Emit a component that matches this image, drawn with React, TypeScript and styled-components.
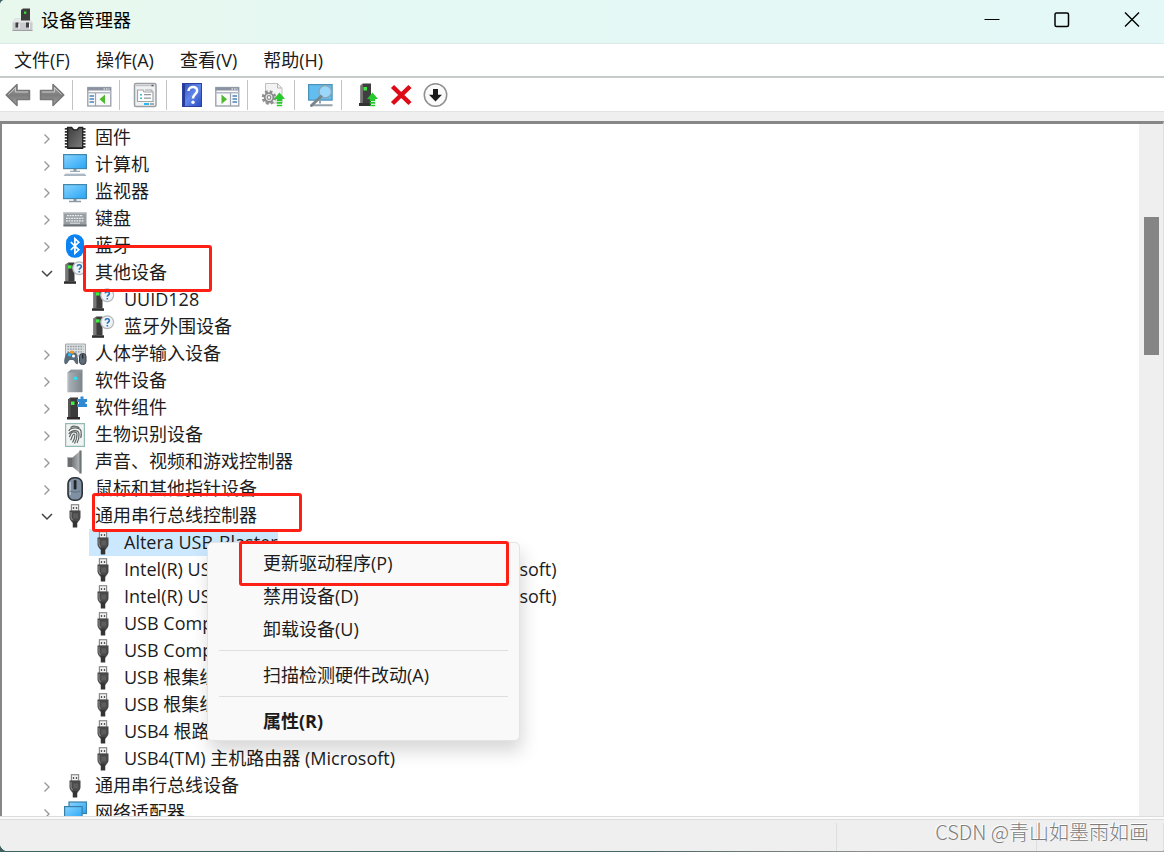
import React from "react";
import styled, { createGlobalStyle, css } from "styled-components";

const GlobalStyle = createGlobalStyle`
  * { box-sizing: border-box; }
  html, body { margin: 0; padding: 0; }
  body {
    background: linear-gradient(90deg, #3d625f 0%, #4b6664 55%, #8f918e 75%, #a3a3a1 100%);
    font-family: "Open Sans", "Noto Sans CJK SC", sans-serif;
    font-size: 18px;
    color: #1c1c1c;
    overflow: hidden;
  }
  button { font: inherit; color: inherit; background: none; border: 0; padding: 0; }
  ul { list-style: none; margin: 0; padding: 0; }
`;

const Window = styled.div`
  display: flex;
  flex-direction: column;
  height: calc(100vh - 1px);
  background: #efefef;
  border-radius: 5px 1px 3px 8px;
  overflow: hidden;
`;

const TitleBar = styled.header`
  display: flex;
  align-items: center;
  flex: none;
  height: 44px;
  padding: 0 0 4px 12px;
  background: linear-gradient(90deg, #e9f8ed 0%, #e4f8f4 35%, #e4f8f7 100%);
  border-bottom: 1px solid #dcebea;
`;

const Title = styled.h1`
  flex: 1;
  margin: 0 0 0 8px;
  font-size: 18px;
  font-weight: 400;
  line-height: 24px;
  color: #000;
`;

const WindowControls = styled.div`
  display: flex;
  gap: 6px;
`;

const WindowButton = styled.button`
  display: flex;
  align-items: center;
  justify-content: center;
  width: 64px;
  height: 40px;
`;

const MenuBar = styled.nav`
  display: flex;
  flex: none;
  height: 34px;
  padding-left: 1px;
  background: #fff;
  border-bottom: 2px solid #c6cacb;
`;

const MenuBarButton = styled.button`
  padding: 0 13px;
  line-height: 32px;
  white-space: nowrap;
`;

const Toolbar = styled.div`
  display: flex;
  align-items: center;
  flex: none;
  height: 33px;
  padding: 1px 0 0 1px;
  background: #fff;
`;

const ToolButton = styled.button`
  display: flex;
  align-items: center;
  justify-content: center;
  width: 34px;
  height: 31px;
`;

const ToolSeparator = styled.span`
  width: 1px;
  height: 30px;
  margin: 0 9px 0 3px;
  background: #c3c3c3;
`;

const Strip = styled.div`
  flex: none;
  height: 10px;
  background: #efefef;
  border-top: 1px solid #e3e3e3;
`;

const Content = styled.main`
  display: flex;
  flex: 1;
  min-height: 0;
  border-top: 3px solid #878787;
  border-left: 2px solid #878787;
  border-right: 1px solid #e0e0e0;
  background: #fff;
`;

const TreePane = styled.div`
  flex: 1;
  min-width: 0;
  overflow: hidden;
`;

const Row = styled.div`
  position: relative;
  display: flex;
  align-items: center;
  height: 27px;
  padding-left: 37px;
`;

const Toggle = styled.button`
  display: flex;
  align-items: center;
  justify-content: center;
  width: 15px;
  height: 27px;
  margin-right: 9px;
`;

const Label = styled.span`
  margin-left: 8px;
  line-height: 27px;
  white-space: nowrap;
`;

const ChildRow = styled.div<{ $selected?: boolean }>`
  position: relative;
  display: flex;
  align-items: center;
  width: max-content;
  height: 27px;
  margin-left: 87px;
  padding: 0 0 0 2px;
  ${(p) =>
    p.$selected &&
    css`
      background: #cce8ff;
    `}
`;

const ChildLabel = styled(Label)`
  margin-left: 9px;
`;

const Annotation = styled.span<{
  $left: number;
  $top: number;
  $width: number;
  $height: number;
}>`
  position: absolute;
  z-index: 3;
  left: ${(p) => p.$left}px;
  top: ${(p) => p.$top}px;
  width: ${(p) => p.$width}px;
  height: ${(p) => p.$height}px;
  border: 3px solid #ff2015;
  border-radius: 3px;
  pointer-events: none;
`;

const ContextMenu = styled.ul`
  position: absolute;
  z-index: 2;
  left: 118px;
  top: 13px;
  width: 313px;
  padding: 4px 0 2px;
  background: #f9f9f9;
  border: 1px solid #e4e4e4;
  border-radius: 5px;
  box-shadow: 2px 10px 18px rgba(0, 0, 0, 0.16);
`;

const ContextItem = styled.li`
  position: relative;
`;

const ContextButton = styled.button<{ $bold?: boolean }>`
  display: block;
  width: 100%;
  padding-left: 55px;
  line-height: 33px;
  text-align: left;
  font-weight: ${(p) => (p.$bold ? 700 : 400)};
`;

const ContextSeparator = styled.li`
  height: 1px;
  margin: 4px 11px 8px;
  background: #dfdfdf;
`;

const ScrollTrack = styled.div`
  display: flex;
  justify-content: center;
  align-items: flex-start;
  width: 24px;
  padding-top: 93px;
  background: #efefef;
`;

const ScrollThumb = styled.div`
  width: 15px;
  height: 23%;
  min-height: 24px;
  background: #858585;
`;

const StatusBar = styled.footer`
  flex: none;
  height: 35px;
  padding-top: 2px;
  background: #fbfbfb;
  border-top: 1px solid #dcdcdc;
`;

const StatusCells = styled.div`
  position: relative;
  display: flex;
  height: 32px;
  padding-top: 3px;
  background: #efefef;
  border-top: 1px solid #dcdcdc;
`;

const StatusCell = styled.div<{ $width?: number }>`
  flex: ${(p) => (p.$width ? `0 0 ${p.$width}px` : "1")};
  border-right: 1px solid #dedede;
`;

const Watermark = styled.span`
  position: absolute;
  right: 15px;
  top: 0;
  font-family: "Noto Sans CJK SC", sans-serif;
  font-weight: 300;
  font-size: 20px;
  line-height: 24px;
  color: #7d7d7d;
  text-shadow: -1px -1px 0 #fff;
  white-space: nowrap;
`;

function Svg({ size = 24, children }: { size?: number; children: React.ReactNode }) {
  return (
    <svg width={size} height={size} viewBox={`0 0 ${size} ${size}`} aria-hidden="true">
      {children}
    </svg>
  );
}

const HiddenSvg = styled.svg`
  display: block;
  width: 0;
  height: 0;
`;

function Gradients() {
  return (
    <HiddenSvg aria-hidden="true">
      <defs>
        <linearGradient id="screen" x1="0" y1="0" x2="1" y2="1">
          <stop offset="0" stopColor="#8ad4ff" />
          <stop offset="1" stopColor="#27a5f5" />
        </linearGradient>
        <linearGradient id="arrow" x1="0" y1="0" x2="0" y2="1">
          <stop offset="0" stopColor="#b0b0b0" />
          <stop offset="0.5" stopColor="#7c7c7c" />
          <stop offset="1" stopColor="#a2a2a2" />
        </linearGradient>
        <linearGradient id="help" x1="0" y1="0" x2="1" y2="1">
          <stop offset="0" stopColor="#3450b8" />
          <stop offset="0.5" stopColor="#5f86ea" />
          <stop offset="1" stopColor="#2b4ac0" />
        </linearGradient>
        <linearGradient id="metal" x1="0" y1="0" x2="1" y2="0">
          <stop offset="0" stopColor="#adb5ba" />
          <stop offset="1" stopColor="#7c858b" />
        </linearGradient>
        <linearGradient id="chip" x1="0" y1="0" x2="1" y2="1">
          <stop offset="0" stopColor="#3c3c3c" />
          <stop offset="1" stopColor="#7d7d7d" />
        </linearGradient>
        <linearGradient id="cone" x1="0" y1="0" x2="1" y2="0">
          <stop offset="0" stopColor="#777" />
          <stop offset="1" stopColor="#b9bec2" />
        </linearGradient>
      </defs>
    </HiddenSvg>
  );
}

const FirmwareIcon = () => (
  <Svg>
    <path d="M3.3 2v20M21 2v20" stroke="#333" strokeWidth="3" strokeDasharray="1.7 1.3" />
    <path d="M4.6 1.5h4l2 2.3h3.5l2-2.3h3.6v20.7H4.6z" fill="url(#chip)" stroke="#222" strokeWidth="1.3" />
    <path d="M4.5 22.3H20" stroke="#1c1c1c" strokeWidth="1.6" />
  </Svg>
);

const ComputerIcon = () => (
  <Svg>
    <rect x="0.6" y="1.6" width="22.8" height="14" fill="url(#screen)" stroke="#4287ae" strokeWidth="1.2" />
    <path d="M12 16v2" stroke="#8195a3" strokeWidth="3" />
    <path d="M7 18.4h10" stroke="#9cabb5" strokeWidth="1.4" />
    <path d="M2.5 20.4h19l2 2.6H.5z" fill="#a9b6c2" />
    <path d="M2.5 20.6h19" stroke="#dde4ea" />
  </Svg>
);

const MonitorIcon = () => (
  <Svg>
    <rect x="0.6" y="4.6" width="22.8" height="14" fill="url(#screen)" stroke="#4287ae" strokeWidth="1.2" />
    <path d="M12 19v2" stroke="#8195a3" strokeWidth="3" />
    <path d="M6 21.4h12" stroke="#8b9aa5" strokeWidth="1.5" />
  </Svg>
);

const KeyboardIcon = () => (
  <Svg>
    <rect x="0.5" y="5" width="23" height="14" fill="#989ea3" />
    <path d="M.5 5.8h23" stroke="#c2c7ca" strokeWidth="1.4" />
    <path d="M4 8.7h16M3 11.3h18M3 13.9h18" stroke="#eef1f3" strokeWidth="1.3" strokeDasharray="1.8 .8" />
    <path d="M7 16.2h10" stroke="#dfe3e6" />
    <path d="M.5 18.5h23" stroke="#6c7378" strokeWidth="1.8" />
  </Svg>
);

const BluetoothIcon = () => (
  <Svg>
    <rect x="3" y="0.3" width="18" height="23.4" rx="8.6" fill="#0a84f4" />
    <path d="M7.8 8l8 7.8-3.9 3.6V4.6l3.9 3.6-8 7.8" fill="none" stroke="#fff" strokeWidth="1.7" />
  </Svg>
);

const UnknownDeviceIcon = () => (
  <Svg>
    <path d="M2.5 3.5l3-2h6v19h-9z" fill="#3d3d3d" />
    <path d="M2.5 3.5l3-2v19h-3z" fill="#777" />
    <rect x="5" y="4.3" width="3.6" height="3.2" fill="#3cf03c" />
    <path d="M1 20.3h12v2.5H1z" fill="#2d2d2d" />
    <circle cx="16.2" cy="7.2" r="6.4" fill="#eef3f7" stroke="#b6b9bb" strokeWidth="1.2" />
    <path d="M14.2 5.4c.2-2.3 4.2-2.2 4.1.2-.1 1.5-2 1.6-2 3.2M16.3 10v1.5" fill="none" stroke="#2773b6" strokeWidth="1.6" />
  </Svg>
);

const HidIcon = () => (
  <Svg>
    <path d="M2.5 2h20v12h-20z" fill="#dce0e3" stroke="#a3a9ae" />
    <path d="M4.5 4.5h16M4.5 7.2h16M4.5 9.8h16" stroke="#8e969c" strokeWidth="1.3" strokeDasharray="1.6 1" />
    <path d="M3.5 11.5c2-2 3.5-.8 5-.8s3.5-1 5 .8c1.5 3 2.5 10 1 10.7-2 .8-3-4.2-4.500-4.200H7c-1.500 0-2.500 5-4.700 4.200C.2 21 1.500 14.500 3.500 11.500z" fill="#596a78" />
    <circle cx="9" cy="10.3" r="1.8" fill="#f29a1f" />
    <circle cx="6.5" cy="12.7" r="1.8" fill="#35b6f2" />
    <circle cx="10.5" cy="14" r="1.5" fill="#fff" />
    <rect x="16.5" y="11.5" width="6.5" height="11" rx="3" fill="#5f6c77" stroke="#343c43" />
    <path d="M19.7 12.5v4" stroke="#20262b" strokeWidth="1.3" />
  </Svg>
);

const SoftwareDeviceIcon = () => (
  <Svg>
    <path d="M4.5 3.5L8 .8h11.5v22.4h-15z" fill="url(#metal)" />
    <path d="M4.5 3.5L8 .8h11.5L18 3.5z" fill="#8d969c" />
    <path d="M5 3.5v19.7" stroke="#c2c9cd" />
    <circle cx="12.5" cy="9.3" r="1.9" fill="#35dcea" />
  </Svg>
);

const SoftwareComponentIcon = () => (
  <Svg>
    <path d="M5 3.5l2.5-2H15V21H5z" fill="#3b3b3b" />
    <path d="M5 3.5l2.5-2V21H5z" fill="#555" />
    <rect x="8" y="5.5" width="3.5" height="3.5" fill="#43ee43" />
    <path d="M4 21h13v2.5H4z" fill="#2a2a2a" />
    <path d="M14 3h3.5V.5h3V3H24v3h-1.500v2H24v3H14V8h2V6h-2z" fill="#2f8ad4" />
  </Svg>
);

const FingerprintIcon = () => (
  <Svg>
    <rect x="2.6" y="0.6" width="18.8" height="22.8" fill="#f0f4f2" stroke="#93b9b3" strokeWidth="1.2" />
    <g fill="none" stroke="#5e6564" strokeWidth="1.2">
      <path d="M7.5 4.5c3-2 7-1.5 8.8.3M5.8 8c1.5-4 11-4.5 12.2 0 .5 2.5.3 5-.3 7" />
      <path d="M5.8 11c3-4.5 9.7-4.5 10.2 0 .2 4-.5 6.5-2 9" />
      <path d="M6.3 14c1.2-1 .8-4.8 4-5.2 2.5-.1 3.7 1 3.7 2.7 0 3.5-1 6.5-2.5 9" />
      <path d="M7.5 17c1.5-1.5 1.5-5.5 3.5-6 1.5.5 1 4.5-1.5 8.5" />
    </g>
  </Svg>
);

const SpeakerIcon = () => (
  <Svg>
    <path d="M4 7.5h5.5V17H4z" fill="#696d70" />
    <path d="M9 8l8.5-7.5v23L9 16.5z" fill="url(#cone)" />
    <path d="M17.5.5v23" stroke="#6f7477" strokeWidth="2.2" />
    <path d="M4.5 7.5V17" stroke="#b8bcbf" />
  </Svg>
);

const MouseIcon = () => (
  <Svg>
    <rect x="5" y="0.8" width="14.2" height="22.4" rx="6" fill="#7f90a3" stroke="#2c3238" strokeWidth="1.6" />
    <path d="M7.2 5v13" stroke="#c6d2de" strokeWidth="1.2" />
    <rect x="10.7" y="3" width="2.8" height="9.5" rx="1.2" fill="#22272c" />
    <path d="M7 14c2 1.5 8 1.5 10 0" fill="none" stroke="#62707e" />
  </Svg>
);

const UsbIcon = () => (
  <Svg>
    <rect x="8.4" y="0.7" width="7.2" height="6.5" fill="#f1f1f1" stroke="#8b8b8b" strokeWidth="1.2" />
    <path d="M10.5 3v2M13.5 3v2" stroke="#555" strokeWidth="1.3" />
    <path d="M6.5 6.5h11V13c0 3-2 3.5-2.5 5.5H9c-.5-2-2.5-2.5-2.5-5.5z" fill="#484848" />
    <path d="M8 8v5c0 1.5 1 2 1.5 3" fill="none" stroke="#858585" strokeWidth="1.2" />
    <path d="M10.2 9.5h5v5h-5z" fill="#5c5c5c" />
    <path d="M12 17v6.5" stroke="#343434" strokeWidth="4.5" />
  </Svg>
);

const NetworkIcon = () => (
  <Svg>
    <rect x="6" y="1" width="17.5" height="11.5" fill="url(#screen)" stroke="#3a7fa8" strokeWidth="1.2" />
    <rect x="1.6" y="5.6" width="17.5" height="12" fill="url(#screen)" stroke="#3a7fa8" strokeWidth="1.2" />
    <path d="M10.3 18v3M6 21h9" stroke="#8195a3" strokeWidth="1.5" />
  </Svg>
);

const AppIcon = () => (
  <svg width="21" height="24" viewBox="0 0 21 24" aria-hidden="true">
    <path d="M3 10.5h14.5l3 4V23H.5v-8.5z" fill="#c9cacd" />
    <path d="M3 10.5h14.5l3 4H.5z" fill="#e6e7e8" />
    <path d="M9 2l2-1.500h7V12.500H9z" fill="#3d3d3d" />
    <rect x="12" y="3.5" width="2.3" height="2.3" fill="#38e038" />
    <path d="M.5 22.5h20" stroke="#9d9ea2" strokeWidth="1.2" />
    <path d="M5 14.5v5M15.5 14.5v5" stroke="#3f3f3f" strokeWidth="3" />
    <path d="M7 15.5v5M17.5 15.5v5" stroke="#fff" />
  </svg>
);

const BackIcon = () => (
  <Svg size={26}>
    <path d="M1.2 13L12 2.5v6h12.5v9H12v6z" fill="url(#arrow)" stroke="#777" strokeWidth="1.5" strokeLinejoin="round" />
    <path d="M3.5 12.5l7-7V10H23" fill="none" stroke="#c8c8c8" />
  </Svg>
);

const ForwardIcon = () => (
  <Svg size={26}>
    <path d="M24.8 13L14 2.5v6H1.5v9H14v6z" fill="url(#arrow)" stroke="#777" strokeWidth="1.5" strokeLinejoin="round" />
    <path d="M3 10h12.5V5.5l7 7" fill="none" stroke="#c8c8c8" />
  </Svg>
);

function PanelIcon({ right }: { right?: boolean }) {
  return (
    <Svg size={26}>
      <rect x="1.8" y="5.5" width="23" height="18.5" fill="#fafafa" stroke="#979ea9" strokeWidth="1.3" />
      <path d="M1.5 7H25" stroke="#8b93a2" strokeWidth="3" />
      <path d="M17.5 7h6" stroke="#fff" strokeWidth="1.2" strokeDasharray="1.5 1" />
      <path d="M2 10.7h23" stroke="#b4bac3" strokeWidth="1.5" />
      <path d={right ? "M16.5 11v13" : "M9.5 11v13"} stroke="#9ca3ad" strokeWidth="1.2" />
      <path
        d={right ? "M18.5 14H23M18.5 17H23M18.5 20H23" : "M3.5 14H8M3.5 17H8M3.5 20H8"}
        stroke="#4a82bd"
        strokeWidth="1.5"
      />
      <path d={right ? "M7.5 12.5l5.500 4.800-5.500 4.700z" : "M19 12.500l-5.500 4.800L19 22z"} fill="#4dba2d" />
    </Svg>
  );
}

const PropertiesIcon = () => (
  <Svg size={26}>
    <rect x="1.5" y="1.5" width="21.5" height="23" rx="1.5" fill="#f0f1f2" stroke="#9b9fa3" strokeWidth="1.5" />
    <path d="M2.5 3.5h19" stroke="#c2c5c8" strokeWidth="1.5" />
    <path d="M18.5 3.5h2" stroke="#555" strokeWidth="1.5" />
    <path d="M4.5 8H10l1 2h9v9.5H4.5z" fill="#fff" stroke="#a1a6aa" strokeWidth="1.2" />
    <path d="M12 8h7v2" fill="none" stroke="#a1a6aa" />
    <path d="M7 12.7h2M7 16.2h2" stroke="#39b8e3" strokeWidth="1.5" />
    <path d="M11 12.7h7M11 16.2h7" stroke="#909599" strokeWidth="1.3" />
    <path d="M11 22h5" stroke="#28b9f0" strokeWidth="2" />
    <path d="M17 22h4" stroke="#a7abae" strokeWidth="2" />
  </Svg>
);

const HelpIcon = () => (
  <Svg size={26}>
    <rect x="2.5" y="1.5" width="19" height="23" fill="url(#help)" stroke="#2c419b" />
    <path d="M4 2v22" stroke="#263c98" strokeWidth="2" />
    <path d="M8.5 9c.2-5.5 9-5.4 8.6 0-.2 3.2-4.1 3.3-4.1 7.5" fill="none" stroke="#fff" strokeWidth="2.5" />
    <circle cx="13" cy="20.3" r="1.7" fill="#fff" />
  </Svg>
);

const GreenUp = ({ x, y }: { x: number; y: number }) => (
  <g transform={`translate(${x} ${y})`}>
    <path d="M5.5 0L11 6.5H8.2v2.3H2.8V6.5H0z" fill="#27c92c" />
    <path d="M2.8 10.4h5.4M2.8 13h5.4" stroke="#27c92c" strokeWidth="1.6" />
  </g>
);

const ScanUpdateIcon = () => (
  <Svg size={26}>
    <path d="M4.5 1.5h12L21 6v15H4.5z" fill="#f3f3f3" stroke="#c0c0c0" />
    <path d="M16.5 1.5V6H21" fill="none" stroke="#b5b5b5" />
    <circle cx="8" cy="15.5" r="5.8" fill="none" stroke="#8f8f8f" strokeWidth="3" strokeDasharray="2.6 1.96" />
    <circle cx="8" cy="15.5" r="4.3" fill="#e9e9e9" stroke="#8b8b8b" strokeWidth="1.7" />
    <circle cx="8" cy="15.5" r="1.8" fill="#fff" stroke="#8b8b8b" strokeWidth="1.2" />
    <GreenUp x={13} y={10.5} />
  </Svg>
);

const ScanHardwareIcon = () => (
  <svg width="28" height="26" viewBox="0 0 28 26" aria-hidden="true">
    <rect x="1.6" y="2.6" width="23.5" height="15.5" fill="#62bdf0" stroke="#4c91b7" strokeWidth="1.2" />
    <path d="M13 18.5v3M6 23.3h19.5" stroke="#95a3ac" strokeWidth="2" />
    <circle cx="18.2" cy="9.7" r="6.3" fill="#a5dcfb" fillOpacity="0.85" stroke="#86a8b9" strokeWidth="1.5" />
    <path d="M14 14.5l-9.5 9" stroke="#79848b" strokeWidth="3" strokeLinecap="round" />
  </svg>
);

const UpdateDriverIcon = () => (
  <Svg size={26}>
    <path d="M5.5 3.5l2.5-2h8V21H5.5z" fill="#3f3f3f" />
    <path d="M5.5 3.5l2.5-2V21H5.5z" fill="#727272" />
    <rect x="8.5" y="5" width="3.5" height="3.5" fill="#3df03d" />
    <path d="M4 21h12v3H4z" fill="#333" />
    <GreenUp x={12} y={10.5} />
  </Svg>
);

const RemoveIcon = () => (
  <Svg size={26}>
    <path d="M3.5 4.5l17.5 17M21 4.5l-17.5 17" stroke="#dd0b17" strokeWidth="4.5" />
  </Svg>
);

const DisableIcon = () => (
  <Svg size={26}>
    <circle cx="12.5" cy="13" r="11.2" fill="#fafafa" stroke="#8f8f8f" strokeWidth="1.5" />
    <path d="M10 7h5v5.7h4l-6.5 6.8L6 12.7h4z" fill="#1b1b1b" />
  </Svg>
);

type ChildNode = { name: string; selected?: boolean };
type TreeNode = {
  name: string;
  Icon: () => React.ReactElement;
  childNodes?: ChildNode[];
  mark?: [number, number, number, number];
};

const nodes: TreeNode[] = [
  { name: "固件", Icon: FirmwareIcon },
  { name: "计算机", Icon: ComputerIcon },
  { name: "监视器", Icon: MonitorIcon },
  { name: "键盘", Icon: KeyboardIcon },
  { name: "蓝牙", Icon: BluetoothIcon },
  {
    name: "其他设备",
    Icon: UnknownDeviceIcon,
    mark: [81, -14, 129, 47],
    childNodes: [{ name: "UUID128" }, { name: "蓝牙外围设备" }],
  },
  { name: "人体学输入设备", Icon: HidIcon },
  { name: "软件设备", Icon: SoftwareDeviceIcon },
  { name: "软件组件", Icon: SoftwareComponentIcon },
  { name: "生物识别设备", Icon: FingerprintIcon },
  { name: "声音、视频和游戏控制器", Icon: SpeakerIcon },
  { name: "鼠标和其他指针设备", Icon: MouseIcon },
  {
    name: "通用串行总线控制器",
    Icon: UsbIcon,
    mark: [90, -9, 210, 39],
    childNodes: [
      { name: "Altera USB-Blaster", selected: true },
      { name: "Intel(R) USB 3.10 可扩展主机控制器 - 1.10 (Microsoft)" },
      { name: "Intel(R) USB 3.10 可扩展主机控制器 - 1.20 (Microsoft)" },
      { name: "USB Composite Device" },
      { name: "USB Composite Device" },
      { name: "USB 根集线器(USB 3.0)" },
      { name: "USB 根集线器(USB 3.0)" },
      { name: "USB4 根路由器" },
      { name: "USB4(TM) 主机路由器 (Microsoft)" },
    ],
  },
  { name: "通用串行总线设备", Icon: UsbIcon },
  { name: "网络适配器", Icon: NetworkIcon },
];

function Chevron({ open }: { open: boolean }) {
  return (
    <svg width="14" height="14" viewBox="0 0 14 14" aria-hidden="true">
      {open ? (
        <path d="M2 5l5 5 5-5" fill="none" stroke="#444" strokeWidth="1.5" />
      ) : (
        <path d="M4.5 3.5L9 8l-4.500 4.500" fill="none" stroke="#999" strokeWidth="1.4" />
      )}
    </svg>
  );
}

function DeviceContextMenu() {
  return (
    <ContextMenu>
      <ContextItem>
        <ContextButton>更新驱动程序(P)</ContextButton>
        <Annotation $left={31} $top={-6} $width={270} $height={45} />
      </ContextItem>
      <ContextItem>
        <ContextButton>禁用设备(D)</ContextButton>
      </ContextItem>
      <ContextItem>
        <ContextButton>卸载设备(U)</ContextButton>
      </ContextItem>
      <ContextSeparator />
      <ContextItem>
        <ContextButton>扫描检测硬件改动(A)</ContextButton>
      </ContextItem>
      <ContextSeparator />
      <ContextItem>
        <ContextButton $bold>属性(R)</ContextButton>
      </ContextItem>
    </ContextMenu>
  );
}

function TreeItem({ node }: { node: TreeNode }) {
  const { name, Icon, childNodes, mark } = node;
  return (
    <li>
      <Row>
        <Toggle aria-label={name} aria-expanded={!!childNodes}>
          <Chevron open={!!childNodes} />
        </Toggle>
        <Icon />
        <Label>{name}</Label>
        {mark && <Annotation $left={mark[0]} $top={mark[1]} $width={mark[2]} $height={mark[3]} />}
      </Row>
      {childNodes && (
        <ul>
          {childNodes.map((child, i) => (
            <li key={i}>
              <ChildRow $selected={child.selected}>
                <Icon />
                <ChildLabel>{child.name}</ChildLabel>
                {child.selected && <DeviceContextMenu />}
              </ChildRow>
            </li>
          ))}
        </ul>
      )}
    </li>
  );
}

export default function App() {
  return (
    <>
      <GlobalStyle />
      <Gradients />
      <Window>
        <TitleBar>
          <AppIcon />
          <Title>设备管理器</Title>
          <WindowControls>
            <WindowButton aria-label="最小化">
              <Svg size={16}>
                <path d="M0.5 7.5h15" stroke="#000" />
              </Svg>
            </WindowButton>
            <WindowButton aria-label="最大化">
              <Svg size={16}>
                <rect x="1" y="1" width="13.5" height="13.5" rx="1.5" fill="none" stroke="#000" strokeWidth="1.5" />
              </Svg>
            </WindowButton>
            <WindowButton aria-label="关闭">
              <Svg size={16}>
                <path d="M1 .5l14 14M15 .5l-14 14" stroke="#000" strokeWidth="1.4" />
              </Svg>
            </WindowButton>
          </WindowControls>
        </TitleBar>
        <MenuBar>
          {["文件(F)", "操作(A)", "查看(V)", "帮助(H)"].map((label) => (
            <MenuBarButton key={label}>{label}</MenuBarButton>
          ))}
        </MenuBar>
        <Toolbar>
          <ToolButton aria-label="后退"><BackIcon /></ToolButton>
          <ToolButton aria-label="前进"><ForwardIcon /></ToolButton>
          <ToolSeparator />
          <ToolButton aria-label="显示/隐藏控制台树"><PanelIcon /></ToolButton>
          <ToolSeparator />
          <ToolButton aria-label="属性"><PropertiesIcon /></ToolButton>
          <ToolSeparator />
          <ToolButton aria-label="帮助"><HelpIcon /></ToolButton>
          <ToolButton aria-label="显示/隐藏操作窗格"><PanelIcon right /></ToolButton>
          <ToolSeparator />
          <ToolButton aria-label="更新驱动程序"><ScanUpdateIcon /></ToolButton>
          <ToolSeparator />
          <ToolButton aria-label="扫描检测硬件改动"><ScanHardwareIcon /></ToolButton>
          <ToolSeparator />
          <ToolButton aria-label="更新设备驱动程序"><UpdateDriverIcon /></ToolButton>
          <ToolButton aria-label="卸载设备"><RemoveIcon /></ToolButton>
          <ToolButton aria-label="禁用设备"><DisableIcon /></ToolButton>
        </Toolbar>
        <Strip />
        <Content>
          <TreePane>
            <ul>
              {nodes.map((node) => (
                <TreeItem key={node.name} node={node} />
              ))}
            </ul>
          </TreePane>
          <ScrollTrack aria-hidden="true">
            <ScrollThumb />
          </ScrollTrack>
        </Content>
        <StatusBar>
          <StatusCells>
            <StatusCell />
            <StatusCell $width={200} />
            <StatusCell $width={127} />
            <Watermark>CSDN @青山如墨雨如画</Watermark>
          </StatusCells>
        </StatusBar>
      </Window>
    </>
  );
}
